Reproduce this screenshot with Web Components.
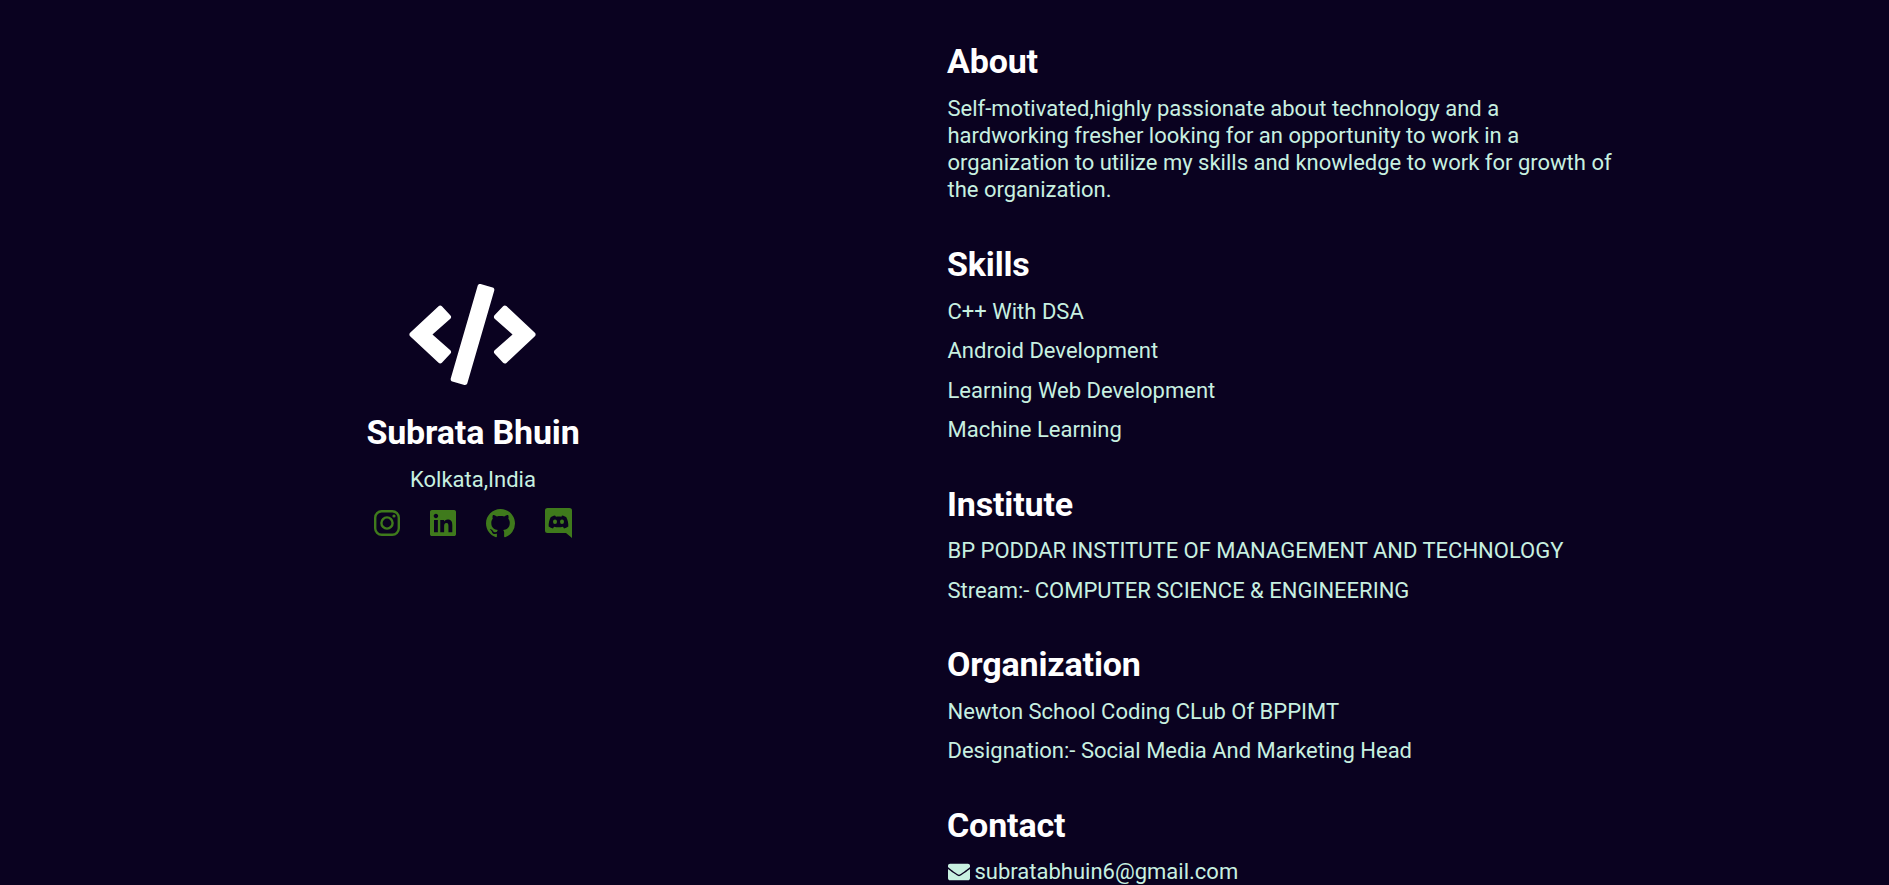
<!DOCTYPE html>
<html lang="en">
<head>
<meta charset="utf-8">
<title>Subrata Bhuin</title>
<style>
  html, body { margin: 0; background: #0a0220; }
  body { font-family: Roboto, "Liberation Sans", sans-serif; color: #c8f0e0; }
</style>
</head>
<body>
<portfolio-page>
  <profile-card slot="left" name="Subrata Bhuin" place="Kolkata,India"></profile-card>
  <info-section title="About">
    <p-text>Self-motivated,highly passionate about technology and a hardworking fresher looking for an opportunity to work in a organization to utilize my skills and knowledge to work for growth of the organization.</p-text>
  </info-section>
  <info-section title="Skills">
    <info-row>C++ With DSA</info-row>
    <info-row>Android Development</info-row>
    <info-row>Learning Web Development</info-row>
    <info-row>Machine Learning</info-row>
  </info-section>
  <info-section title="Institute">
    <info-row>BP PODDAR INSTITUTE OF MANAGEMENT AND TECHNOLOGY</info-row>
    <info-row>Stream:- COMPUTER SCIENCE &amp; ENGINEERING</info-row>
  </info-section>
  <info-section title="Organization">
    <info-row>Newton School Coding CLub Of BPPIMT</info-row>
    <info-row>Designation:- Social Media And Marketing Head</info-row>
  </info-section>
  <info-section title="Contact">
    <info-row><svg slot="icon" width="22" height="22" viewBox="0 0 512 512" fill="#c8f0e0"><path d="M502.3 190.8c3.9-3.1 9.7-.2 9.7 4.7V400c0 26.5-21.5 48-48 48H48c-26.5 0-48-21.5-48-48V195.6c0-5 5.7-7.8 9.7-4.7 22.4 17.4 52.1 39.5 154.1 113.6 21.1 15.4 56.7 47.8 92.2 47.6 35.7.3 72-32.8 92.3-47.6 102-74.1 131.6-96.3 154-113.7zM256 320c23.2.4 56.6-29.2 73.4-41.4 132.7-96.3 142.8-104.7 173.4-128.7 5.8-4.5 9.2-11.5 9.2-18.9v-19c0-26.5-21.5-48-48-48H48C21.5 64 0 85.5 0 112v19c0 7.4 3.4 14.3 9.2 18.9 30.6 23.9 40.7 32.4 173.4 128.7 16.8 12.2 50.2 41.8 73.4 41.4z"/></svg>subratabhuin6@gmail.com</info-row>
  </info-section>
</portfolio-page>

<script>
class PortfolioPage extends HTMLElement {
  constructor() {
    super();
    this.attachShadow({ mode: 'open' });
    this.shadowRoot.innerHTML = `
      <style>
        :host { display: grid; grid-template-columns: 947px 1fr; height: 885px; overflow: hidden; }
        .left { display: flex; justify-content: center; align-items: flex-start; padding-top: 285px; padding-right: 1px; }
        .right { padding-top: 40px; width: 675px; display: flex; flex-direction: column; gap: 26.2px; }
      </style>
      <div class="left"><slot name="left"></slot></div>
      <div class="right"><slot></slot></div>`;
  }
}

class ProfileCard extends HTMLElement {
  constructor() {
    super();
    this.attachShadow({ mode: 'open' });
  }
  connectedCallback() {
    const green = '#3f7a1c';
    this.shadowRoot.innerHTML = `
      <style>
        :host { display: flex; flex-direction: column; align-items: center; }
        .logo { display: block; width: 127px; height: 101px; margin: -1px 2px 0 0; }
        h1 { margin: 26px 0 0; font-size: 34px; line-height: 42px; font-weight: 700; letter-spacing: -0.15px; color: #fff; }
        p { margin: 13px 0 0; font-size: 22px; line-height: 27px; }
        .links { display: flex; gap: 30px; margin-top: 15px; height: 30px; align-items: center; }
        .links svg { display: block; fill: ${green}; }
      </style>
      <svg class="logo" viewBox="0 0 640 512" fill="#fff"><path d="M278.9 511.5l-61-17.7c-6.4-1.8-10-8.5-8.2-14.9L346.2 8.7c1.8-6.4 8.5-10 14.9-8.2l61 17.7c6.4 1.8 10 8.5 8.2 14.9L293.8 503.3c-1.9 6.4-8.5 10.1-14.9 8.2zm-114-112.2l43.5-46.4c4.6-4.9 4.3-12.7-.8-17.2L117 256l90.6-79.7c5.1-4.5 5.5-12.3.8-17.2l-43.5-46.4c-4.5-4.8-12.1-5.1-17-.5L3.8 247.2c-5.1 4.7-5.1 12.8 0 17.5l144.1 135.1c4.9 4.6 12.5 4.4 17-.5zm327.2.6l144.1-135.1c5.1-4.7 5.1-12.8 0-17.5L492.1 112.1c-4.8-4.5-12.4-4.3-17 .5L431.6 159c-4.6 4.9-4.3 12.7.8 17.2L523 256l-90.6 79.7c-5.1 4.5-5.5 12.3-.8 17.2l43.5 46.4c4.5 4.9 12.1 5.1 17 .6z"/></svg>
      <h1>${this.getAttribute('name')}</h1>
      <p>${this.getAttribute('place')}</p>
      <div class="links">
        <svg width="26" height="26" viewBox="0 0 26 26"><rect x="1.2" y="1.2" width="23.6" height="23.6" rx="6.5" fill="none" stroke="${green}" stroke-width="2.4"/><circle cx="13" cy="13" r="5.6" fill="none" stroke="${green}" stroke-width="2.4"/><circle cx="20" cy="6" r="1.6"/></svg>
        <svg width="26" height="26" viewBox="0 32 448 448" preserveAspectRatio="none"><path d="M416 32H31.900C14.300 32 0 46.500 0 64.300v383.400C0 465.500 14.300 480 31.900 480H416c17.600 0 32-14.500 32-32.300V64.300c0-17.800-14.400-32.300-32-32.300zM135.400 416H69V202.200h66.500V416zm-33.200-243c-21.300 0-38.500-17.300-38.500-38.500S80.900 96 102.200 96c21.200 0 38.500 17.300 38.500 38.500 0 21.300-17.200 38.500-38.500 38.500zm282.100 243h-66.400V312c0-24.800-.5-56.700-34.500-56.700-34.600 0-39.900 27-39.900 54.900V416h-66.400V202.200h63.700v29.200h.9c8.900-16.800 30.600-34.500 62.900-34.500 67.200 0 79.700 44.300 79.700 101.900V416z"/></svg>
        <svg width="29" height="29" viewBox="0 0 16 16"><path d="M8 0C3.58 0 0 3.58 0 8c0 3.54 2.29 6.53 5.47 7.59.4.07.55-.17.55-.38 0-.19-.01-.82-.01-1.49-2.01.37-2.53-.49-2.69-.94-.09-.23-.48-.94-.82-1.13-.28-.15-.68-.52-.01-.53.63-.01 1.08.58 1.23.82.72 1.21 1.87.87 2.33.66.07-.52.28-.87.51-1.07-1.78-.2-3.64-.89-3.64-3.95 0-.87.31-1.59.82-2.15-.08-.2-.36-1.02.08-2.12 0 0 .67-.21 2.2.82.64-.18 1.32-.27 2-.27.68 0 1.36.09 2 .27 1.53-1.04 2.2-.82 2.2-.82.44 1.1.16 1.92.08 2.12.51.56.82 1.27.82 2.15 0 3.07-1.87 3.75-3.65 3.95.29.25.54.73.54 1.48 0 1.07-.01 1.93-.01 2.2 0 .21.15.46.55.38A8.013 8.013 0 0016 8c0-4.42-3.58-8-8-8z"/></svg>
        <svg width="27" height="30" viewBox="0 0 27 30"><path fill-rule="evenodd" d="M2.5 0h22A2.5 2.5 0 0 1 27 2.5V30l-6-5H2.5A2.5 2.5 0 0 1 0 22.500V2.500A2.500 2.500 0 0 1 2.500 0zM10 7.500c-1.800.3-3.300 1-4.300 1.700-1.500 3-2.200 6-2 9.300 1.400 1 2.900 1.600 4.300 1.900l1-1.700c2.900.8 6.100.8 9 0l1 1.700c1.400-.3 2.900-.9 4.300-1.900.2-3.300-.5-6.300-2-9.300-1-.7-2.500-1.400-4.300-1.700l-.6 1.200c-1.800-.3-3.600-.3-5.400 0zM10 11.500a2 2.200 0 1 1 0 4.400 2 2.200 0 0 1 0-4.400zM17 11.500a2 2.200 0 1 1 0 4.400 2 2.200 0 0 1 0-4.400z"/></svg>
      </div>`;
  }
}

class InfoSection extends HTMLElement {
  constructor() {
    super();
    this.attachShadow({ mode: 'open' });
  }
  connectedCallback() {
    this.shadowRoot.innerHTML = `
      <style>
        :host { display: block; }
        h2 { margin: 0 0 13px; font-size: 34px; line-height: 42px; font-weight: 700; letter-spacing: -0.15px; color: #fff; }
      </style>
      <h2>${this.getAttribute('title')}</h2>
      <slot></slot>`;
  }
}

class PText extends HTMLElement {
  constructor() {
    super();
    this.attachShadow({ mode: 'open' });
    this.shadowRoot.innerHTML = `
      <style>:host { display: block; font-size: 22px; line-height: 27px; margin-bottom: 14px; padding-left: 0.5px; }</style>
      <slot></slot>`;
  }
}

class InfoRow extends HTMLElement {
  constructor() {
    super();
    this.attachShadow({ mode: 'open' });
    this.shadowRoot.innerHTML = `
      <style>
        :host { display: flex; align-items: center; gap: 5px; font-size: 22px; line-height: 27px; margin-top: -0.5px; margin-bottom: 13.1px; padding-left: 0.5px; }
      </style>
      <slot name="icon"></slot><span><slot></slot></span>`;
  }
}

customElements.define('portfolio-page', PortfolioPage);
customElements.define('profile-card', ProfileCard);
customElements.define('info-section', InfoSection);
customElements.define('p-text', PText);
customElements.define('info-row', InfoRow);
</script>
</body>
</html>
